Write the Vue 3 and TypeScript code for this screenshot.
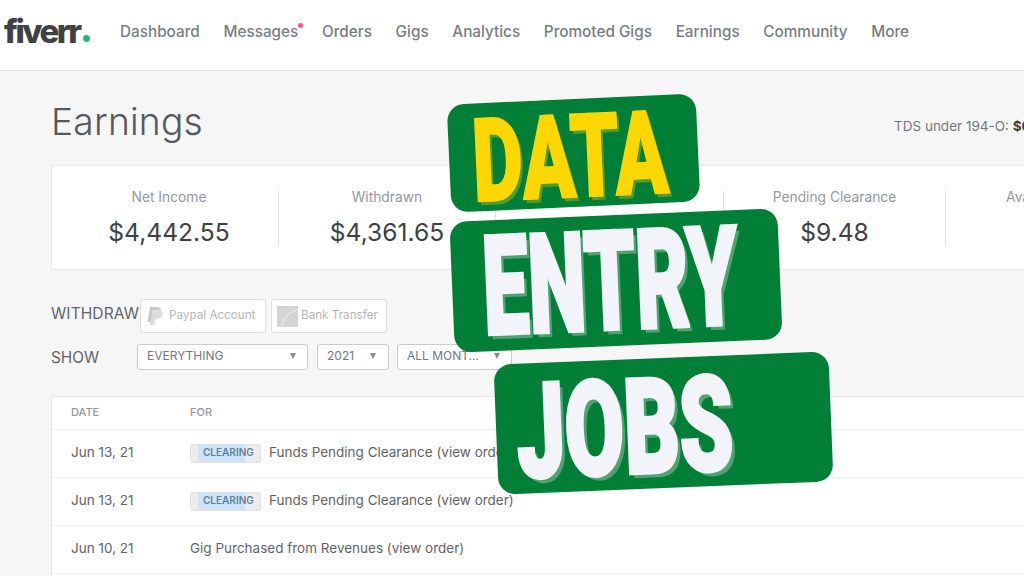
<script setup lang="ts">
const nav = ['Dashboard', 'Messages', 'Orders', 'Gigs', 'Analytics', 'Promoted Gigs', 'Earnings', 'Community', 'More']
const stats = [
  { label: 'Net Income', value: '$4,442.55' },
  { label: 'Withdrawn', value: '$4,361.65' },
  { label: 'Used for Purchases', value: '$71.42' },
  { label: 'Pending Clearance', value: '$9.48' },
  { label: 'Available Funds', value: '$0' },
]
const rows = [
  { date: 'Jun 13, 21', badge: true, text: 'Funds Pending Clearance (view order)' },
  { date: 'Jun 13, 21', badge: true, text: 'Funds Pending Clearance (view order)' },
  { date: 'Jun 10, 21', badge: false, text: 'Gig Purchased from Revenues (view order)' },
]
</script>

<template>
  <div class="screen">
    <header class="topbar">
      <div class="logo">fiverr<i class="dot"></i></div>
      <nav class="nav">
        <a v-for="item in nav" :key="item" class="nav-item">
          {{ item }}<i v-if="item === 'Messages'" class="unread"></i>
        </a>
      </nav>
    </header>

    <main class="page">
      <div class="title-row">
        <h1>Earnings</h1>
        <p class="tds">TDS under 194-O: <b>$0.00</b></p>
      </div>

      <section class="stats">
        <div v-for="s in stats" :key="s.label" class="stat">
          <span class="stat-label">{{ s.label }}</span>
          <span class="stat-value">{{ s.value }}</span>
        </div>
      </section>

      <div class="control-row withdraw-row">
        <span class="control-label withdraw-label">WITHDRAW</span>
        <button class="method paypal">
          <svg width="18" height="20" viewBox="0 0 18 20">
            <path d="M4 1h6.500c3.500 0 5 2 4.300 4.800C14 9 12 10.300 9 10.300H7L6 16H1.500z" fill="#c9c9c9" />
            <path d="M6.500 4h6.300c3 0 4.500 1.800 3.900 4.500-.6 3-2.600 4.300-5.400 4.300H9.500L8.600 19H4z" fill="#dcdcdc" />
          </svg>
          <span>Paypal Account</span>
        </button>
        <button class="method bank">
          <svg width="21" height="21" viewBox="0 0 21 21">
            <rect width="21" height="21" fill="#d4d4d4" />
            <path d="M5 20C6 13 10 7 20 4" stroke="#f4f4f4" stroke-width="0.900" fill="none" />
          </svg>
          <span>Bank Transfer</span>
        </button>
      </div>

      <div class="control-row show-row">
        <span class="control-label show-label">SHOW</span>
        <div class="select sel-all"><span>EVERYTHING</span><i class="caret"></i></div>
        <div class="select sel-year"><span>2021</span><i class="caret"></i></div>
        <div class="select sel-month"><span>ALL MONT...</span><i class="caret"></i></div>
      </div>

      <section class="table">
        <div class="tr head">
          <span class="td-date">DATE</span>
          <span class="td-for">FOR</span>
        </div>
        <div v-for="(r, i) in rows" :key="i" class="tr">
          <span class="td-date">{{ r.date }}</span>
          <span class="td-for">
            <span v-if="r.badge" class="badge">CLEARING</span>{{ r.text }}
          </span>
        </div>
        <div class="tr"></div>
      </section>
    </main>

    <div class="banner data"><span>DATA</span></div>
    <div class="banner entry"><span>ENTRY</span></div>
    <div class="banner jobs"><span>JOBS</span></div>
  </div>
</template>

<style>
html, body { margin: 0; }
</style>

<style scoped>
.screen {
  position: relative;
  width: 1024px;
  height: 576px;
  overflow: hidden;
  background: #f6f6f6;
  font-family: Inter, "Liberation Sans", sans-serif;
  color: #62646a;
}
.topbar {
  height: 71px;
  box-sizing: border-box;
  display: flex;
  align-items: center;
  background: #fff;
  border-bottom: 1px solid #e6e6e6;
  padding: 0 0 8px 4px;
}
.logo {
  width: 116px;
  display: flex;
  align-items: flex-end;
  font-size: 33px;
  font-weight: 800;
  letter-spacing: -2.500px;
  line-height: 30px;
  color: #404145;
}
.dot {
  width: 7px;
  height: 7px;
  margin: 0 0 4px 3px;
  border-radius: 50%;
  background: #1dbf73;
}
.nav { display: flex; gap: 23.700px; }
.nav-item {
  position: relative;
  font-size: 15.300px;
  font-weight: 500;
  color: #7a7d85;
  white-space: nowrap;
}
.unread {
  position: absolute;
  top: 1px;
  right: -5px;
  width: 5px;
  height: 5px;
  border-radius: 50%;
  background: #ff4fa8;
}
.page { padding-left: 51px; width: 1200px; box-sizing: border-box; }
.title-row {
  display: grid;
  grid-template-columns: 843px auto;
  align-items: center;
  height: 94px;
}
h1 {
  margin: 6px 0 0;
  font-size: 37.200px;
  font-weight: 300;
  color: #55585f;
  letter-spacing: .2px;
}
.tds { margin: 16px 0 0; font-size: 13.500px; color: #74767e; }
.tds b { color: #404145; }
.stats {
  display: flex;
  height: 105px;
  box-sizing: border-box;
  background: #fff;
  border: 1px solid #e8e8e8;
  width: 1149px;
}
.stat {
  display: flex;
  flex-direction: column;
  align-items: center;
  gap: 12px;
  margin: 24px 0 23px;
  border-right: 1px solid #e4e4e4;
  box-sizing: border-box;
}
.stat:nth-child(1) { width: 227px; padding-left: 8px; }
.stat:nth-child(2) { width: 217px; }
.stat:nth-child(3) { width: 228px; }
.stat:nth-child(4) { width: 222px; }
.stat:nth-child(5) { width: 222px; border: 0; }
.stat-label { font-size: 13.800px; color: #95979d; line-height: 15px; white-space: nowrap; }
.stat-value { font-size: 24.600px; color: #404145; line-height: 30px; font-weight: 400; }
.control-row { display: flex; align-items: center; }
.withdraw-row { margin-top: 29px; height: 34px; }
.show-row { margin-top: 11px; height: 26px; }
.control-label { color: #62646a; }
.withdraw-label { width: 89px; font-size: 15.500px; letter-spacing: .1px; padding-bottom: 6px; }
.show-label { width: 86px; font-size: 15.300px; }
.method {
  display: flex;
  align-items: center;
  height: 34px;
  box-sizing: border-box;
  background: #fff;
  border: 1px solid #dedede;
  border-radius: 3px;
  padding: 0;
  font-family: inherit;
  font-size: 11.700px;
  color: #b5b6ba;
  white-space: nowrap;
}
.method span { padding-bottom: 2px; }
.paypal { width: 126px; gap: 5px; padding-left: 5px; }
.bank { width: 116px; margin-left: 5px; gap: 3px; padding-left: 5px; }
.select {
  display: flex;
  align-items: center;
  justify-content: space-between;
  height: 26px;
  box-sizing: border-box;
  background: #fff;
  border: 1px solid #cccccc;
  border-radius: 3px;
  font-size: 12px;
  color: #74767e;
  padding: 0 11px 0 9px;
  white-space: nowrap;
}
.select span { padding-bottom: 3px; }
.sel-all { width: 171px; }
.sel-year { width: 72px; margin-left: 9px; padding-right: 12px; }
.sel-month { width: 115px; margin-left: 8px; }
.caret {
  width: 0;
  height: 0;
  margin-bottom: 2px;
  border-left: 3.500px solid transparent;
  border-right: 3.500px solid transparent;
  border-top: 6px solid #8a8c92;
}
.table {
  margin-top: 26px;
  width: 1149px;
  background: #fff;
  border: 1px solid #e8e8e8;
}
.tr {
  display: flex;
  align-items: center;
  height: 47px;
  box-sizing: content-box;
  border-top: 1px solid #ececec;
  font-size: 13.500px;
  color: #62646a;
  white-space: nowrap;
}
.tr.head {
  height: 32px;
  border-top: 0;
  font-size: 11px;
  font-weight: 500;
  color: #95979d;
}
.td-date { width: 119px; padding-left: 19px; flex: none; padding-bottom: 3px; }
.td-for { display: flex; align-items: center; padding-bottom: 3px; }
.badge {
  display: inline-block;
  width: 71px;
  height: 19px;
  line-height: 15px;
  box-sizing: border-box;
  margin: 3px 8px 0 0;
  padding-left: 12px;
  border: 1px solid #e2e2e2;
  border-radius: 3px;
  font-size: 10px;
  font-weight: 600;
  color: #5d7f9e;
  background: linear-gradient(90deg, #ececec 7px, #cde4fa 7px, #cde4fa 54px, #ececec 54px);
}
.banner {
  position: absolute;
  display: flex;
  align-items: center;
  justify-content: center;
  background: #027f36;
  border-radius: 17px;
  font-family: Roboto, "Liberation Sans", sans-serif;
  font-weight: 900;
  line-height: 1;
  white-space: nowrap;
}
.banner span { display: block; }
.data {
  left: 449px;
  top: 99px;
  width: 249px;
  height: 108px;
  transform: rotate(-2.600deg);
  font-size: 116px;
  color: #ffd700;
  text-shadow: 4px 4px 0 #509c2c;
  -webkit-text-stroke: 2px #ffd700;
}
.data span { transform: scaleX(.67); margin: 8px 0 0 -8px; }
.entry {
  left: 452px;
  top: 215px;
  width: 328px;
  height: 131px;
  transform: rotate(-2.400deg);
  font-size: 138px;
  color: #f3f4f9;
  text-shadow: 6px 5px 0 #4fa274;
  -webkit-text-stroke: 4px #f3f4f9;
}
.entry span { transform: scaleX(.59); margin: 2px 0 0 -11px; }
.jobs {
  left: 496px;
  top: 358px;
  width: 335px;
  height: 130px;
  transform: rotate(-2.300deg);
  font-size: 132px;
  color: #f3f4f9;
  text-shadow: 6px 5px 0 #4fa274;
  -webkit-text-stroke: 4px #f3f4f9;
}
.jobs span { transform: scaleX(.65); margin: 8px 0 0 -78px; }
</style>
